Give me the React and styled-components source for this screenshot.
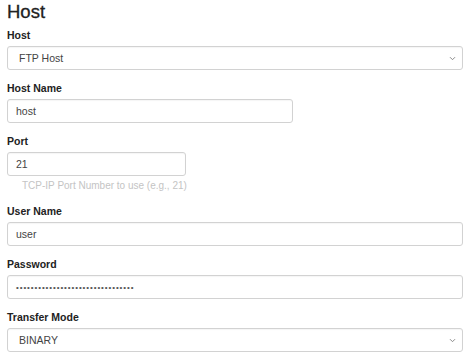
import React from 'react';
import styled, { createGlobalStyle } from 'styled-components';

const GlobalStyle = createGlobalStyle`
  html, body {
    margin: 0;
    padding: 0;
    background: #fff;
  }
  body {
    font-family: "Liberation Sans", Arial, sans-serif;
    color: #222;
  }
`;

const Panel = styled.div`
  width: 474px;
  height: 362px;
  box-sizing: border-box;
  padding: 2px 12px 0 7px;
  overflow: hidden;
`;

const Title = styled.h2`
  margin: 0;
  font-size: 18.5px;
  line-height: 20px;
  font-weight: 500;
  color: #222;
  -webkit-text-stroke: 0.3px #222;
`;

const Field = styled.div`
  display: flex;
  flex-direction: column;
  align-items: flex-start;
  margin-top: ${(p) => p.$top || 12}px;
`;

const Label = styled.label`
  font-size: 10.5px;
  font-weight: bold;
  line-height: 13px;
  color: #222;
  margin-bottom: 4px;
`;

const Box = styled.div`
  box-sizing: border-box;
  width: ${(p) => p.$width || 456}px;
  height: 24px;
  display: flex;
  align-items: center;
  justify-content: space-between;
  padding: 0 6px 0 ${(p) => p.$indent || 8}px;
  border: 1px solid #d2d2d2;
  border-radius: 3px;
  background: #fff;
  box-shadow: inset 0 1px 1px rgba(0, 0, 0, 0.04);
  font-size: 10.5px;
  color: #444;
`;

const Dots = styled.span`
  font-size: 8px;
  letter-spacing: 0.9px;
  color: #555;
`;

const Help = styled.div`
  margin: 4px 0 0 15px;
  font-size: 10px;
  line-height: 12px;
  color: #c4c4c4;
`;

const Chevron = () => (
  <svg width="7" height="5" viewBox="0 0 7 5" fill="none">
    <path d="M1 1.2 L3.5 3.7 L6 1.2" stroke="#8a8a8a" strokeWidth="1" />
  </svg>
);

const Select = ({ value }) => (
  <Box $indent={11}>
    <span>{value}</span>
    <Chevron />
  </Box>
);

const App = () => {
  return (
    <>
      <GlobalStyle />
      <Panel>
        <Title>Host</Title>
        <Field $top={7}>
          <Label>Host</Label>
          <Select value="FTP Host" />
        </Field>
        <Field>
          <Label>Host Name</Label>
          <Box $width={286}>host</Box>
        </Field>
        <Field>
          <Label>Port</Label>
          <Box $width={179}>21</Box>
          <Help>TCP-IP Port Number to use (e.g., 21)</Help>
        </Field>
        <Field $top={13}>
          <Label>User Name</Label>
          <Box>user</Box>
        </Field>
        <Field>
          <Label>Password</Label>
          <Box>
            <Dots>••••••••••••••••••••••••••••••••</Dots>
          </Box>
        </Field>
        <Field>
          <Label>Transfer Mode</Label>
          <Select value="BINARY" />
        </Field>
      </Panel>
    </>
  );
};

export default App;
